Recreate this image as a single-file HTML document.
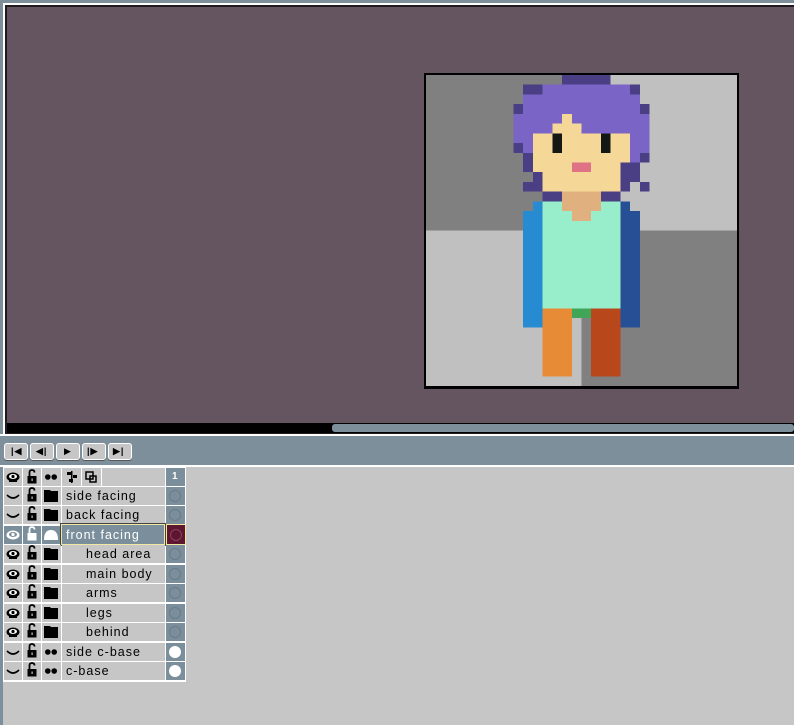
<!DOCTYPE html>
<html><head><style>
*{margin:0;padding:0;box-sizing:border-box}
body{width:794px;height:725px;background:#7e8f9c;position:relative;overflow:hidden;font-family:"Liberation Sans",sans-serif}
.a{position:absolute}
.c{position:absolute;background:#c6c6c6;height:18px}
.t{position:absolute;font-size:12.5px;letter-spacing:1px;color:#000;line-height:18px;height:18px;white-space:nowrap}
.btn{position:absolute;top:443px;width:24px;height:17px;background:#c6c6c6;border:1px solid #fff;border-radius:3px;box-shadow:0 1px 0 #555}
</style></head><body>
<div class="a" style="left:3px;top:3px;width:791px;height:432px;background:#fff"></div>
<div class="a" style="left:5px;top:5px;width:789px;height:429px;background:#1e1a1e"></div>
<div class="a" style="left:7px;top:7px;width:787px;height:416px;background:#655560"></div>
<div class="a" style="left:7px;top:423px;width:787px;height:10px;background:#000"></div>
<div class="a" style="left:332px;top:424px;width:462px;height:8px;background:#7e8f9c;border-radius:3px"></div>
<div class="a" style="left:0;top:434px;width:794px;height:2px;background:#fff"></div>
<div class="a" style="left:424px;top:73px;width:315px;height:316px;background:#000"></div>
<svg class="a" style="left:426px;top:75px" width="311" height="311" viewBox="0 0 32 32" shape-rendering="crispEdges">
<rect width="32" height="32" fill="#c0c0c0"/>
<rect width="16" height="16" fill="#808080"/><rect x="16" y="16" width="16" height="16" fill="#808080"/>
<g fill="#4a3e85">
<rect x="14" y="0" width="5" height="1"/><rect x="10" y="1" width="2" height="1"/><rect x="21" y="1" width="1" height="1"/>
<rect x="9" y="3" width="1" height="1"/><rect x="22" y="3" width="1" height="1"/><rect x="9" y="7" width="1" height="1"/>
<rect x="10" y="8" width="1" height="2"/><rect x="22" y="8" width="1" height="1"/><rect x="20" y="9" width="2" height="2"/>
<rect x="11" y="10" width="1" height="1"/><rect x="10" y="11" width="2" height="1"/><rect x="20" y="11" width="1" height="1"/><rect x="22" y="11" width="1" height="1"/>
<rect x="12" y="12" width="2" height="1"/><rect x="18" y="12" width="2" height="1"/></g>
<g fill="#7a65c6">
<rect x="12" y="1" width="9" height="1"/><rect x="10" y="2" width="12" height="1"/><rect x="10" y="3" width="12" height="1"/>
<rect x="9" y="4" width="14" height="1"/><rect x="9" y="5" width="14" height="1"/><rect x="9" y="6" width="2" height="1"/><rect x="21" y="6" width="2" height="2"/><rect x="10" y="7" width="1" height="1"/><rect x="21" y="8" width="1" height="1"/></g>
<g fill="#f5d797">
<rect x="14" y="4" width="1" height="1"/><rect x="13" y="5" width="3" height="1"/><rect x="11" y="6" width="10" height="3"/><rect x="11" y="9" width="9" height="1"/><rect x="12" y="10" width="8" height="2"/></g>
<rect x="13" y="6" width="1" height="2" fill="#141814"/><rect x="18" y="6" width="1" height="2" fill="#141814"/>
<rect x="15" y="9" width="2" height="1" fill="#e07285"/>
<rect x="12" y="13" width="8" height="11" fill="#98edcb"/>
<g fill="#e0b07e"><rect x="14" y="12" width="4" height="2"/><rect x="15" y="14" width="2" height="1"/></g>
<rect x="11" y="13" width="1" height="1" fill="#268bd0"/><rect x="10" y="14" width="2" height="12" fill="#268bd0"/>
<rect x="20" y="13" width="1" height="1" fill="#274f96"/><rect x="20" y="14" width="2" height="12" fill="#274f96"/>
<rect x="12" y="24" width="3" height="7" fill="#e88b36"/><rect x="15" y="24" width="2" height="1" fill="#40a557"/><rect x="17" y="24" width="3" height="7" fill="#b9471c"/>
</svg>
<div class="btn" style="left:4px"></div><div class="btn" style="left:30px"></div><div class="btn" style="left:56px"></div><div class="btn" style="left:82px"></div><div class="btn" style="left:108px"></div>
<div class="t" style="left:11px;top:442px;font-size:9px;font-weight:bold">|◀</div>
<div class="t" style="left:36px;top:442px;font-size:9px;font-weight:bold">◀|</div>
<div class="t" style="left:64px;top:442px;font-size:9px">▶</div>
<div class="t" style="left:87px;top:442px;font-size:9px;font-weight:bold">|▶</div>
<div class="t" style="left:113px;top:442px;font-size:9px;font-weight:bold">▶|</div>
<div class="a" style="left:0;top:465px;width:794px;height:2px;background:#fff"></div>
<div class="a" style="left:3px;top:467px;width:791px;height:258px;background:#c6c6c6"></div>
<div class="a" style="left:3px;top:467px;width:183px;height:215px;background:#fff"></div>
<div class="a" style="left:0;top:467px;width:3px;height:258px;background:#7e8f9c"></div>

<div class="c" style="left:4px;top:468px;width:18px"></div><div class="c" style="left:23px;top:468px;width:18px"></div><div class="c" style="left:42px;top:468px;width:19px"></div><div class="c" style="left:62px;top:468px;width:19px"></div><div class="c" style="left:82px;top:468px;width:19px"></div><div class="c" style="left:102px;top:468px;width:63px"></div>
<div class="c" style="left:166px;top:468px;width:19px;background:#7b8e9b"></div>
<div class="t" style="left:172px;top:468px;color:#fff;font-size:10px;font-weight:bold">1</div>

<div class="c" style="left:4px;top:487px;width:18px"></div><div class="c" style="left:23px;top:487px;width:18px"></div><div class="c" style="left:42px;top:487px;width:19px"></div><div class="c" style="left:62px;top:487px;width:103px"></div><div class="c" style="left:166px;top:487px;width:19px;background:#7b8e9b"></div>
<div class="c" style="left:4px;top:506px;width:18px"></div><div class="c" style="left:23px;top:506px;width:18px"></div><div class="c" style="left:42px;top:506px;width:19px"></div><div class="c" style="left:62px;top:506px;width:103px"></div><div class="c" style="left:166px;top:506px;width:19px;background:#7b8e9b"></div>
<div class="c" style="left:4px;top:526px;width:18px;background:#7b8e9b"></div><div class="c" style="left:23px;top:526px;width:18px;background:#7b8e9b"></div><div class="c" style="left:42px;top:526px;width:19px;background:#7b8e9b"></div><div class="c" style="left:61px;top:524px;width:104px;height:21px;background:#7b8e9b;border:1px solid #f0e8a0;box-shadow:0 0 0 1px #444"></div><div class="c" style="left:166px;top:524px;width:20px;height:21px;background:#5e1530;border:1px solid #f0e8a0"></div>
<div class="c" style="left:4px;top:545px;width:18px"></div><div class="c" style="left:23px;top:545px;width:18px"></div><div class="c" style="left:42px;top:545px;width:19px"></div><div class="c" style="left:62px;top:545px;width:103px"></div><div class="c" style="left:166px;top:545px;width:19px;background:#7b8e9b"></div>
<div class="c" style="left:4px;top:565px;width:18px"></div><div class="c" style="left:23px;top:565px;width:18px"></div><div class="c" style="left:42px;top:565px;width:19px"></div><div class="c" style="left:62px;top:565px;width:103px"></div><div class="c" style="left:166px;top:565px;width:19px;background:#7b8e9b"></div>
<div class="c" style="left:4px;top:584px;width:18px"></div><div class="c" style="left:23px;top:584px;width:18px"></div><div class="c" style="left:42px;top:584px;width:19px"></div><div class="c" style="left:62px;top:584px;width:103px"></div><div class="c" style="left:166px;top:584px;width:19px;background:#7b8e9b"></div>
<div class="c" style="left:4px;top:604px;width:18px"></div><div class="c" style="left:23px;top:604px;width:18px"></div><div class="c" style="left:42px;top:604px;width:19px"></div><div class="c" style="left:62px;top:604px;width:103px"></div><div class="c" style="left:166px;top:604px;width:19px;background:#7b8e9b"></div>
<div class="c" style="left:4px;top:623px;width:18px"></div><div class="c" style="left:23px;top:623px;width:18px"></div><div class="c" style="left:42px;top:623px;width:19px"></div><div class="c" style="left:62px;top:623px;width:103px"></div><div class="c" style="left:166px;top:623px;width:19px;background:#7b8e9b"></div>
<div class="c" style="left:4px;top:643px;width:18px"></div><div class="c" style="left:23px;top:643px;width:18px"></div><div class="c" style="left:42px;top:643px;width:19px"></div><div class="c" style="left:62px;top:643px;width:103px"></div><div class="c" style="left:166px;top:643px;width:19px;background:#7b8e9b"></div>
<div class="c" style="left:4px;top:662px;width:18px"></div><div class="c" style="left:23px;top:662px;width:18px"></div><div class="c" style="left:42px;top:662px;width:19px"></div><div class="c" style="left:62px;top:662px;width:103px"></div><div class="c" style="left:166px;top:662px;width:19px;background:#7b8e9b"></div>

<svg class="a" style="left:0;top:0" width="200" height="700">
<defs>
<g id="e"><ellipse cx="0" cy="0" rx="6.5" ry="4.5" fill="#000"/><ellipse cx="0" cy="-0.5" rx="4" ry="2.5" fill="#fff"/><circle cx="0" cy="-0.5" r="1.6" fill="#000"/><rect x="-4" y="3.5" width="8" height="1.5" fill="#000"/></g>
<g id="ce"><path d="M-6 -1 Q0 5 6 -1" stroke="#000" stroke-width="1.6" fill="none"/></g>
<g id="l"><path d="M-2.5 -1 V-4.5 Q-2.5 -7 0 -7 Q2.5 -7 2.5 -4.5" stroke="#000" stroke-width="1.8" fill="none"/><rect x="-4.5" y="-1" width="9" height="7.5" fill="#000"/><rect x="-0.5" y="1.5" width="1.2" height="2.5" fill="#c6c6c6"/></g>
<g id="f"><path d="M-7 -6 H-1 L0 -5 H7 V6 H-7Z" fill="#000"/></g>
<g id="d"><circle cx="-3.2" cy="0" r="2.8" fill="#000"/><circle cx="3.2" cy="0" r="2.8" fill="#000"/></g>
<g id="r"><circle r="5.5" fill="none" stroke="#6c7b86"/></g>
<g id="w"><circle r="6" fill="#fff"/></g>
</defs>
<use href="#e" x="13" y="477"/><use href="#l" x="32" y="477"/><use href="#d" x="51" y="477"/>
<g transform="translate(72,477)"><rect x="-5" y="-5" width="4" height="3" fill="#000"/><rect x="1" y="-2" width="4" height="3" fill="#000"/><rect x="-3" y="2" width="4" height="3" fill="#000"/><rect x="-1" y="-6" width="1.5" height="12" fill="#000"/></g>
<g transform="translate(91,477)"><rect x="-5" y="-5" width="7" height="7" fill="none" stroke="#000" stroke-width="1.5"/><rect x="-1" y="-1" width="6" height="6" fill="none" stroke="#000" stroke-width="1.5"/></g>
<use href="#ce" x="13" y="496"/><use href="#l" x="32" y="495"/><use href="#f" x="51" y="496"/><use href="#r" x="175" y="496"/>
<use href="#ce" x="13" y="515"/><use href="#l" x="32" y="514"/><use href="#f" x="51" y="515"/><use href="#r" x="175" y="515"/>
<g transform="translate(13,535)"><ellipse rx="6.5" ry="4.5" fill="#fff"/><ellipse cy="-0.5" rx="4" ry="2.5" fill="#7b8e9b"/><circle cy="-0.5" r="1.6" fill="#fff"/></g>
<g transform="translate(32,534)"><path d="M-2.5 -1 V-4.5 Q-2.5 -7 0 -7 Q2.5 -7 2.5 -4.5" stroke="#fff" stroke-width="1.8" fill="none"/><rect x="-4.5" y="-1" width="9" height="7.5" fill="#fff"/></g>
<path d="M44 540 Q44 530 51 530 Q58 530 58 540Z" fill="#fff"/>
<circle cx="176" cy="535" r="5.5" fill="none" stroke="#8a4060"/>
<use href="#e" x="13" y="554"/><use href="#l" x="32" y="553"/><use href="#f" x="51" y="554"/><use href="#r" x="175" y="554"/>
<use href="#e" x="13" y="574"/><use href="#l" x="32" y="573"/><use href="#f" x="51" y="574"/><use href="#r" x="175" y="574"/>
<use href="#e" x="13" y="593"/><use href="#l" x="32" y="592"/><use href="#f" x="51" y="593"/><use href="#r" x="175" y="593"/>
<use href="#e" x="13" y="613"/><use href="#l" x="32" y="612"/><use href="#f" x="51" y="613"/><use href="#r" x="175" y="613"/>
<use href="#e" x="13" y="632"/><use href="#l" x="32" y="631"/><use href="#f" x="51" y="632"/><use href="#r" x="175" y="632"/>
<use href="#ce" x="13" y="652"/><use href="#l" x="32" y="651"/><use href="#d" x="51" y="652"/><use href="#w" x="175" y="652"/>
<use href="#ce" x="13" y="671"/><use href="#l" x="32" y="670"/><use href="#d" x="51" y="671"/><use href="#w" x="175" y="671"/>
</svg>

<div class="t" style="left:66px;top:487px">side facing</div>
<div class="t" style="left:66px;top:506px">back facing</div>
<div class="t" style="left:66px;top:526px;color:#fff">front facing</div>
<div class="t" style="left:86px;top:545px">head area</div>
<div class="t" style="left:86px;top:565px">main body</div>
<div class="t" style="left:86px;top:584px">arms</div>
<div class="t" style="left:86px;top:604px">legs</div>
<div class="t" style="left:86px;top:623px">behind</div>
<div class="t" style="left:66px;top:643px">side c-base</div>
<div class="t" style="left:66px;top:662px">c-base</div>
</body></html>
